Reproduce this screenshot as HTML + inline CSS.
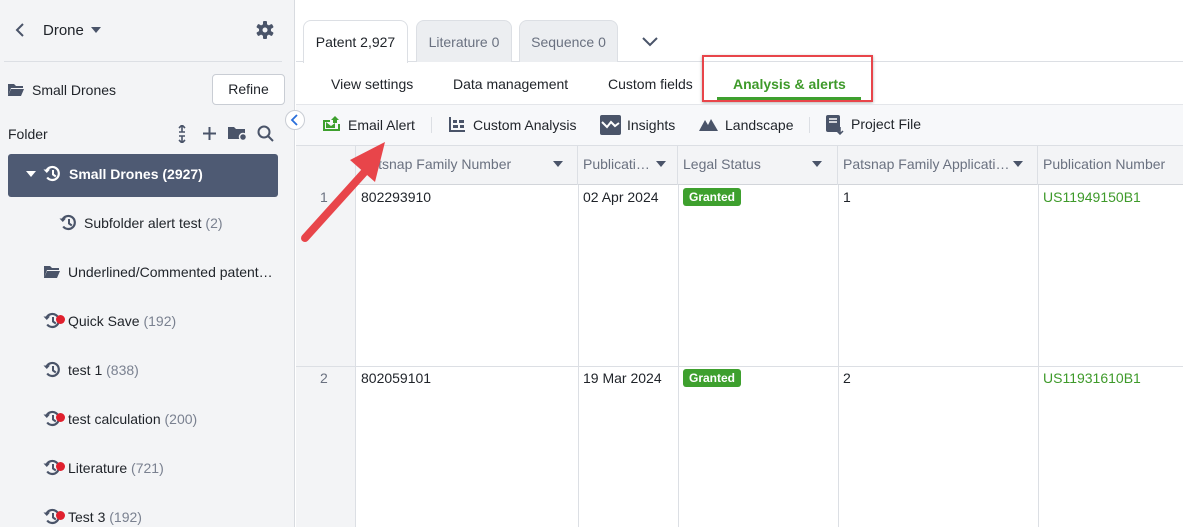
<!DOCTYPE html>
<html><head><style>
*{box-sizing:border-box;margin:0;padding:0}
body{width:1183px;height:527px;overflow:hidden;font-family:"Liberation Sans",Arial,sans-serif;font-size:14px;color:#1f2329;position:relative;background:#fff}
.a{position:absolute}
.side{left:0;top:0;width:295px;height:527px;background:#f3f4f6;border-right:1px solid #d8dbe0}
.gray{color:#7a8190}
.tab{top:20px;height:42px;border:1px solid #dcdfe4;border-bottom:none;border-radius:8px 8px 0 0;background:#eceef1;color:#6a7180;text-align:center;line-height:42px}
.th{top:146px;height:39px;line-height:36px;color:#6a7180;padding-left:5px;border-right:1px solid #dcdfe4}
.caret{display:inline-block;width:0;height:0;border-left:5px solid transparent;border-right:5px solid transparent;border-top:6px solid #4a5469}
.vl{width:1px;background:#dcdfe4}
.granted{background:#3ea02e;color:#fff;font-weight:bold;font-size:12px;border-radius:3px;padding:2px 6px}
.dot{width:9px;height:9px;border-radius:50%;background:#e0202e}
</style></head><body>
<svg width="0" height="0" style="position:absolute"><defs>
<symbol id="h" viewBox="0 0 18 18"><path d="M4.2 12.5A6.5 6.5 0 1 0 3.3 6" stroke="currentColor" stroke-width="2.2" fill="none"/><path d="M0.5 4.5l3.3 3.5 3.2-3.5z" fill="currentColor"/><path d="M10 5v4.5l2.8 2" stroke="currentColor" stroke-width="2" fill="none"/></symbol>
</defs></svg>
<div class="a side"></div>
<svg class="a" style="left:14px;top:22px" width="12" height="16"><path d="M9 2L3 8l6 6" stroke="#4a5469" stroke-width="2" fill="none"/></svg>
<div class="a" style="left:43px;top:22px;font-size:15px">Drone <span class="caret" style="margin-left:3px;vertical-align:2px"></span></div>
<svg class="a" style="left:256px;top:21px" width="18" height="18" viewBox="0 0 18 18"><g fill="#4a5469"><circle cx="9" cy="9" r="6"/><rect x="7" y="0" width="4" height="18" rx="1"/><rect x="7" y="0" width="4" height="18" rx="1" transform="rotate(60 9 9)"/><rect x="7" y="0" width="4" height="18" rx="1" transform="rotate(120 9 9)"/></g><circle cx="9" cy="9" r="2.5" fill="#f3f4f6"/></svg>
<div class="a" style="left:4px;top:61px;width:278px;height:1px;background:#dcdfe4"></div>
<svg class="a" style="left:8px;top:83px" width="16" height="13"><path d="M0 1h6l2 2h7v2H3L0 13z M3 6h13l-3 7H0z" fill="#4a5469"/></svg>
<div class="a" style="left:32px;top:82px">Small Drones</div>
<div class="a" style="left:212px;top:74px;width:73px;height:31px;border:1px solid #c9cdd4;border-radius:4px;background:#fff;text-align:center;line-height:29px">Refine</div>
<div class="a" style="left:8px;top:126px">Folder</div>
<svg class="a" style="left:178px;top:125px" width="8" height="18"><path d="M4 0v7M4 11v7M1 3l3-3 3 3M1 15l3 3 3-3M1 7h6M1 11h6" stroke="#4a5469" stroke-width="1.6" fill="none"/></svg>
<svg class="a" style="left:203px;top:127px" width="13" height="13"><path d="M6.5 0v13M0 6.5h13" stroke="#4a5469" stroke-width="2"/></svg>
<svg class="a" style="left:228px;top:126px" width="20" height="15"><path d="M0 1h6l2 2h9v10H0z" fill="#4a5469"/><circle cx="15" cy="11" r="3.5" fill="#4a5469" stroke="#f3f4f6" stroke-width="1.5"/></svg>
<svg class="a" style="left:257px;top:125px" width="17" height="17"><circle cx="7" cy="7" r="5.5" stroke="#4a5469" stroke-width="2" fill="none"/><path d="M11 11l5 5" stroke="#4a5469" stroke-width="2"/></svg>
<div class="a" style="left:8px;top:154px;width:270px;height:43px;background:#4e5a73;border-radius:3px"></div>
<div class="a" style="left:26px;top:171px;border-left:5px solid transparent;border-right:5px solid transparent;border-top:6px solid #fff"></div>
<svg class="a" style="left:43px;top:165px;color:#fff" width="18" height="18"><use href="#h"/></svg>
<div class="a" style="left:69px;top:166px;color:#fff;font-weight:bold">Small Drones (2927)</div>
<svg class="a" style="left:59px;top:214px;color:#4a5469" width="18" height="18"><use href="#h"/></svg>
<div class="a" style="left:84px;top:215px">Subfolder alert test <span class="gray">(2)</span></div>
<svg class="a" style="left:44px;top:266px" width="16" height="12"><path d="M0 0h6l2 2h7v2H3L0 12z M3 5h13l-3 7H0z" fill="#4a5469"/></svg>
<div class="a" style="left:68px;top:264px">Underlined/Commented patent…</div>
<svg class="a" style="left:43px;top:312px;color:#4a5469" width="18" height="18"><use href="#h"/></svg><div class="a dot" style="left:56px;top:315px"></div>
<div class="a" style="left:68px;top:313px">Quick Save <span class="gray">(192)</span></div>
<svg class="a" style="left:43px;top:361px;color:#4a5469" width="18" height="18"><use href="#h"/></svg>
<div class="a" style="left:68px;top:362px">test 1 <span class="gray">(838)</span></div>
<svg class="a" style="left:43px;top:410px;color:#4a5469" width="18" height="18"><use href="#h"/></svg><div class="a dot" style="left:56px;top:413px"></div>
<div class="a" style="left:68px;top:411px">test calculation <span class="gray">(200)</span></div>
<svg class="a" style="left:43px;top:459px;color:#4a5469" width="18" height="18"><use href="#h"/></svg><div class="a dot" style="left:56px;top:462px"></div>
<div class="a" style="left:68px;top:460px">Literature <span class="gray">(721)</span></div>
<svg class="a" style="left:43px;top:508px;color:#4a5469" width="18" height="18"><use href="#h"/></svg><div class="a dot" style="left:56px;top:511px"></div>
<div class="a" style="left:68px;top:509px">Test 3 <span class="gray">(192)</span></div>

<div class="a" style="left:296px;top:61px;width:887px;height:1px;background:#dcdfe4"></div>
<div class="a tab" style="left:303px;width:105px;background:#fff;color:#1f2329;height:43px">Patent 2,927</div>
<div class="a tab" style="left:416px;width:96px">Literature 0</div>
<div class="a tab" style="left:519px;width:99px">Sequence 0</div>
<svg class="a" style="left:642px;top:37px" width="16" height="10"><path d="M1 1l7 7 7-7" stroke="#4a5469" stroke-width="2" fill="none"/></svg>
<div class="a" style="left:331px;top:76px">View settings</div>
<div class="a" style="left:453px;top:76px">Data management</div>
<div class="a" style="left:608px;top:76px">Custom fields</div>
<div class="a" style="left:733px;top:76px;color:#3e9a2a;font-weight:bold">Analysis &amp; alerts</div>
<div class="a" style="left:717px;top:97px;width:144px;height:3px;background:#3ea02e"></div>
<div class="a" style="left:702px;top:55px;width:171px;height:47px;border:2.5px solid #e8454a;box-shadow:0 1px 3px rgba(0,0,0,.3)"></div>
<div class="a" style="left:296px;top:104px;width:887px;height:42px;background:#f7f8fa;border-top:1px solid #e4e6ea;border-bottom:1px solid #dcdfe4"></div>
<div class="a" style="left:285px;top:110px;width:20px;height:20px;border:1px solid #c9cdd4;border-radius:50%;background:#fff"></div>
<svg class="a" style="left:290px;top:114px" width="10" height="12"><path d="M7 1L2 6l5 5" stroke="#2a6fdb" stroke-width="1.8" fill="none"/></svg>
<svg class="a" style="left:323px;top:116px" width="17" height="15"><path d="M0 4h7v2H2v7h13V8h2v7H0z" fill="#3ea02e"/><path d="M3 6l5 4 4-3v5H3z" fill="#3ea02e"/><path d="M12 0l4 4h-2v3h-4V4H8z" fill="#3ea02e"/></svg>
<div class="a" style="left:348px;top:117px">Email Alert</div>
<div class="a vl" style="left:431px;top:117px;height:16px"></div>
<svg class="a" style="left:449px;top:116px" width="17" height="16"><path d="M1 1v14h15" stroke="#4a5469" stroke-width="2" fill="none"/><path d="M4 4h4v3H4zM10 4h5v3h-5zM4 9h5v3H4zM11 9h4v3h-4z" fill="#4a5469"/></svg>
<div class="a" style="left:473px;top:117px">Custom Analysis</div>
<svg class="a" style="left:600px;top:115px" width="21" height="20"><rect width="21" height="20" rx="2" fill="#4a5469"/><path d="M2 7l5 5 4-5 4 4 4-3" stroke="#fff" stroke-width="2" fill="none"/></svg>
<div class="a" style="left:627px;top:117px">Insights</div>
<svg class="a" style="left:699px;top:117px" width="19" height="14"><path d="M0 14L6 3l3 5 3-6 7 12z" fill="#4a5469"/></svg>
<div class="a" style="left:725px;top:117px">Landscape</div>
<div class="a vl" style="left:809px;top:117px;height:16px"></div>
<svg class="a" style="left:826px;top:115px" width="18" height="20"><rect x="0" y="0" width="14" height="17" rx="2" fill="#4a5469"/><path d="M3 4h8M3 7h8" stroke="#fff" stroke-width="1.5"/><path d="M14 12v7M11 16l3 3 3-3" stroke="#4a5469" stroke-width="1.5" fill="none"/></svg>
<div class="a" style="left:851px;top:116px">Project File</div>
<div class="a" style="left:296px;top:146px;width:887px;height:39px;background:#f3f4f6;border-bottom:1px solid #d2d5da"></div>
<div class="a" style="left:296px;top:146px;width:60px;height:381px;background:#f3f4f6;border-right:1px solid #dcdfe4"></div>
<div class="a th" style="left:356px;width:222px">Patsnap Family Number<span class="caret a" style="left:197px;top:15px"></span></div>
<div class="a th" style="left:578px;width:100px">Publicati…<span class="caret a" style="left:78px;top:15px"></span></div>
<div class="a th" style="left:678px;width:160px">Legal Status<span class="caret a" style="left:134px;top:15px"></span></div>
<div class="a th" style="left:838px;width:200px">Patsnap Family Applicati…<span class="caret a" style="left:175px;top:15px"></span></div>
<div class="a th" style="left:1038px;width:145px;border:none">Publication Number</div>
<div class="a vl" style="left:578px;top:185px;height:342px"></div>
<div class="a vl" style="left:678px;top:185px;height:342px"></div>
<div class="a vl" style="left:838px;top:185px;height:342px"></div>
<div class="a vl" style="left:1038px;top:185px;height:342px"></div>
<div class="a" style="left:296px;top:366px;width:887px;height:1px;background:#dcdfe4"></div>
<div class="a" style="left:320px;top:189px;color:#6a7180">1</div>
<div class="a" style="left:361px;top:189px">802293910</div>
<div class="a" style="left:583px;top:189px">02 Apr 2024</div>
<div class="a" style="left:683px;top:188px"><span class="granted">Granted</span></div>
<div class="a" style="left:843px;top:189px">1</div>
<div class="a" style="left:1043px;top:189px;color:#3e9a2a">US11949150B1</div>
<div class="a" style="left:320px;top:370px;color:#6a7180">2</div>
<div class="a" style="left:361px;top:370px">802059101</div>
<div class="a" style="left:583px;top:370px">19 Mar 2024</div>
<div class="a" style="left:683px;top:369px"><span class="granted">Granted</span></div>
<div class="a" style="left:843px;top:370px">2</div>
<div class="a" style="left:1043px;top:370px;color:#3e9a2a">US11931610B1</div>
<svg class="a" style="left:290px;top:130px" width="110" height="120"><path d="M15 108L80 36" stroke="#e8454a" stroke-width="8" stroke-linecap="round"/><path d="M95 12L60 30L85 52z" fill="#e8454a"/></svg>
</body></html>
